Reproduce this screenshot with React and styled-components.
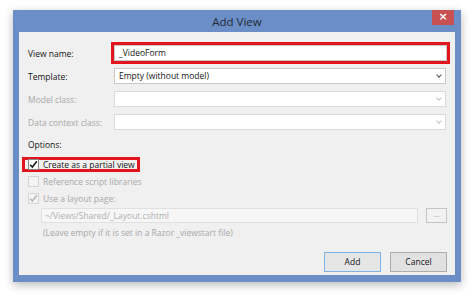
import styled, { createGlobalStyle } from 'styled-components';

const blue = '#6b8ec6';
const red = '#e3141b';

const Global = createGlobalStyle`
    body {
        margin: 0;
        background: #ffffff;
        font-family: "Open Sans", "Noto Sans", sans-serif;
    }
`;

const Check = ({ disabled }) => (
    <svg width="9" height="9" viewBox="0 0 8 8">
        <path d="M1 4.2 L3 6.3 L7 1.2" fill="none" stroke={disabled ? '#b8b8b8' : '#1a1a1a'} strokeWidth="1.4" />
    </svg>
);

const App = () => {
    return <Page>
        <Global />
        <Window>
            <TitleBar>
                <span />
                <Title>Add View</Title>
                <Close>×</Close>
            </TitleBar>

            <Content>
                <Form>
                    <Label>View name:</Label>
                    <TextBox $highlight>_VideoForm</TextBox>

                    <Label>Template:</Label>
                    <Combo>Empty (without model)<Chevron /></Combo>

                    <Label $disabled>Model class:</Label>
                    <Combo $disabled><Chevron $disabled /></Combo>

                    <Label $disabled>Data context class:</Label>
                    <Combo $disabled><Chevron $disabled /></Combo>
                </Form>

                <Options>Options:</Options>

                <CheckRow $highlight>
                    <Box><Check /></Box>
                    Create as a partial view
                </CheckRow>
                <CheckRow $disabled>
                    <Box $disabled />
                    Reference script libraries
                </CheckRow>
                <CheckRow $disabled>
                    <Box $disabled><Check disabled /></Box>
                    Use a layout page:
                </CheckRow>

                <PathRow>
                    <PathBox>~/Views/Shared/_Layout.cshtml</PathBox>
                    <Browse>...</Browse>
                </PathRow>
                <Hint>(Leave empty if it is set in a Razor _viewstart file)</Hint>

                <Buttons>
                    <Button $primary>Add</Button>
                    <Button>Cancel</Button>
                </Buttons>
            </Content>
        </Window>
    </Page>
}

const Page = styled.div`
    width: 474px;
    height: 298px;
    padding: 10px 0 0 13px;
    box-sizing: border-box;
`;

const Window = styled.div`
    width: 448px;
    height: 272px;
    box-sizing: border-box;
    background: ${blue};
    padding: 0 6px 7px;
    display: flex;
    flex-direction: column;
    box-shadow: 0 3px 9px rgba(0, 0, 0, 0.28);
`;

const TitleBar = styled.div`
    height: 22px;
    display: grid;
    grid-template-columns: 1fr auto 1fr;
    align-items: start;
`;

const Title = styled.div`
    font-size: 11.5px;
    line-height: 23px;
    color: #222a36;
`;

const Close = styled.div`
    justify-self: end;
    width: 22px;
    height: 15px;
    margin-right: 1px;
    background: #c75050;
    color: #ffffff;
    font-family: "DejaVu Sans", sans-serif;
    font-size: 11px;
    font-weight: bold;
    line-height: 14px;
    text-align: center;
`;

const Content = styled.div`
    flex: 1;
    background: #f0f0f0;
    padding: 13px 8px 0 9px;
    display: flex;
    flex-direction: column;
    font-size: 8.5px;
    color: #151515;
`;

const Form = styled.div`
    display: grid;
    grid-template-columns: 86px 1fr;
    grid-auto-rows: 16px;
    row-gap: 7px;
    align-items: center;
`;

const Label = styled.div`
    color: ${p => p.$disabled ? '#a8a8a8' : '#151515'};
`;

const TextBox = styled.div`
    height: 16px;
    box-sizing: border-box;
    background: #ffffff;
    border: 1px solid #c8c8c8;
    padding-left: 4px;
    line-height: 14px;
    outline: ${p => p.$highlight ? `3px solid ${red}` : 'none'};
    outline-offset: 0;
`;

const Combo = styled.div`
    height: 16px;
    box-sizing: border-box;
    margin-right: 1px;
    background: #ffffff;
    border: 1px solid ${p => p.$disabled ? '#dadada' : '#c8c8c8'};
    padding: 0 4px;
    line-height: 14px;
    display: flex;
    justify-content: space-between;
    align-items: center;
`;

const Chevron = styled.span`
    margin-left: auto;
    width: 3px;
    height: 3px;
    border-right: 1px solid ${p => p.$disabled ? '#c4c4c4' : '#555'};
    border-bottom: 1px solid ${p => p.$disabled ? '#c4c4c4' : '#555'};
    transform: translateY(-1px) rotate(45deg);
`;

const Options = styled.div`
    margin-top: 9px;
    line-height: 11px;
`;

const CheckRow = styled.div`
    align-self: flex-start;
    height: 15px;
    display: flex;
    align-items: center;
    gap: 4px;
    color: ${p => p.$disabled ? '#a8a8a8' : '#151515'};
    margin-top: ${p => p.$highlight ? '7px' : '2px'};
    margin-left: -6px;
    padding: 0 5px 0 6px;
    box-shadow: ${p => p.$highlight ? `inset 0 0 0 3px ${red}` : 'none'};
`;

const Box = styled.span`
    width: 11px;
    height: 11px;
    box-sizing: border-box;
    border: 1px solid ${p => p.$disabled ? '#d4d4d4' : '#8a8a8a'};
    background: ${p => p.$disabled ? '#f4f4f4' : '#ffffff'};
    display: flex;
    align-items: center;
    justify-content: center;
`;

const PathRow = styled.div`
    display: flex;
    gap: 8px;
    margin: 2px 0 0 13px;
    height: 15px;
`;

const PathBox = styled.div`
    flex: 1;
    box-sizing: border-box;
    background: #f6f6f6;
    border: 1px solid #e0e0e0;
    padding-left: 3px;
    line-height: 13px;
    color: #b0b0b0;
`;

const Browse = styled.div`
    width: 21px;
    box-sizing: border-box;
    border: 1px solid #c4c4c4;
    background: #f2f2f2;
    color: #9a9a9a;
    font-size: 7px;
    line-height: 11px;
    text-align: center;
`;

const Hint = styled.div`
    margin: 4px 0 0 15px;
    line-height: 11px;
    color: #a8a8a8;
`;

const Buttons = styled.div`
    margin-top: auto;
    margin-bottom: 3px;
    display: flex;
    justify-content: flex-end;
    gap: 9px;
`;

const Button = styled.div`
    width: 57px;
    height: 20px;
    box-sizing: border-box;
    border: 1px solid ${p => p.$primary ? '#7fb2e5' : '#acacac'};
    background: ${p => p.$primary ? '#e6e6e6' : '#e1e1e1'};
    color: #151515;
    font-size: 8.5px;
    line-height: 18px;
    text-align: center;
`;

export default App;
